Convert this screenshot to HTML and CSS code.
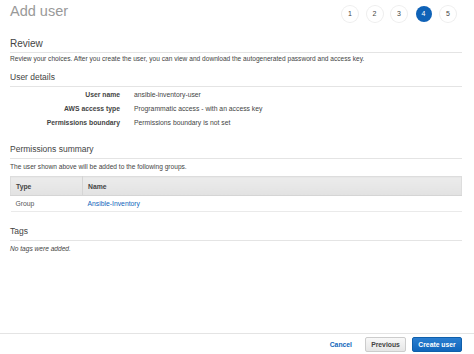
FILE: index.html
```html
<!DOCTYPE html>
<html lang="en">
<head>
  <meta charset="UTF-8">
  <title>Add user</title>
  <link rel="stylesheet" href="styles.css">
</head>
<body>
  <div class="page">
    <header class="top">
      <h1 class="title">Add user</h1>
      <ol class="steps">
        <li class="step">1</li>
        <li class="step">2</li>
        <li class="step">3</li>
        <li class="step active">4</li>
        <li class="step">5</li>
      </ol>
    </header>

    <section class="section">
      <h2 class="section-title big">Review</h2>
      <p class="text">Review your choices. After you create the user, you can view and download the autogenerated password and access key.</p>
    </section>

    <section class="section user-sec">
      <h3 class="section-title">User details</h3>
      <dl class="details">
        <dt>User name</dt>
        <dd>ansible-inventory-user</dd>
        <dt>AWS access type</dt>
        <dd>Programmatic access - with an access key</dd>
        <dt>Permissions boundary</dt>
        <dd>Permissions boundary is not set</dd>
      </dl>
    </section>

    <section class="section perm-sec">
      <h3 class="section-title">Permissions summary</h3>
      <p class="text">The user shown above will be added to the following groups.</p>
      <table class="groups">
        <thead>
          <tr><th class="col-type">Type</th><th>Name</th></tr>
        </thead>
        <tbody>
          <tr><td class="cell-type">Group</td><td><a href="#">Ansible-Inventory</a></td></tr>
        </tbody>
      </table>
    </section>

    <section class="section tags-sec">
      <h3 class="section-title">Tags</h3>
      <p class="text empty">No tags were added.</p>
    </section>
  </div>

  <footer class="actions">
    <a href="#" class="cancel">Cancel</a>
    <button class="btn btn-default">Previous</button>
    <button class="btn btn-primary">Create user</button>
  </footer>
</body>
</html>
```

FILE: styles.css
```css
body {
  font-family: "Liberation Sans", Arial, sans-serif;
  margin: 0;
  width: 474px;
  height: 354px;
  overflow: hidden;
  background: #fff;
  color: #444;
  display: flex;
  flex-direction: column;
}
.page {
  flex: 1;
  padding: 0 12px 0 10px;
}
.top {
  display: flex;
  justify-content: space-between;
  align-items: flex-start;
  height: 38px;
}
.title {
  margin: 0;
  font-size: 14.5px;
  font-weight: normal;
  color: #999;
  line-height: 23px;
}
.steps {
  list-style: none;
  display: flex;
  gap: 8.5px;
  margin: 6px 6px 0 0;
  padding: 0;
}
.step {
  width: 16px;
  height: 16px;
  border-radius: 50%;
  box-shadow: 0 0 0 1px #eee;
  font-size: 7px;
  line-height: 16px;
  text-align: center;
  color: #444;
}
.step.active {
  background: #0f62b7;
  color: #fff;
  box-shadow: none;
}
.user-sec {
  margin-top: 9px;
}
.perm-sec {
  margin-top: 17px;
}
.tags-sec {
  margin-top: 14px;
}
.section-title {
  margin: 0;
  font-size: 8.5px;
  line-height: 10px;
  font-weight: normal;
  color: #444;
  padding-bottom: 4px;
  border-bottom: 1px solid #e4e4e4;
}
.section-title.big {
  font-size: 10px;
  line-height: 12px;
  padding-bottom: 2px;
}
.text {
  font-size: 6.6px;
  line-height: 8px;
  margin: 4px 0 0;
}
.section-title.big + .text {
  margin-top: 2px;
}
.empty {
  font-style: italic;
}
.details {
  display: grid;
  grid-template-columns: 110px 1fr;
  column-gap: 14px;
  row-gap: 6px;
  font-size: 6.8px;
  line-height: 8px;
  margin: 4px 0 0;
}
.details dt {
  text-align: right;
  font-weight: bold;
}
.details dd {
  margin: 0;
}
.groups {
  width: 100%;
  border-collapse: collapse;
  font-size: 6.8px;
  margin-top: 5px;
  color: #444;
}
.groups th {
  text-align: left;
  background: linear-gradient(#ececec, #e2e2e2);
  border-top: 1px solid #ddd;
  border-bottom: 1px solid #d5d5d5;
  height: 18px;
  padding: 0 5px;
  font-weight: bold;
}
.groups th.col-type {
  width: 61px;
  border-right: 1px solid #d5d5d5;
  border-left: 1px solid #ddd;
}
.groups th:last-child {
  border-right: 1px solid #ddd;
}
.groups td {
  height: 15px;
  padding: 0 5px;
  border-bottom: 1px solid #eaeaea;
}
.groups .cell-type {
  color: #555;
}
.groups a {
  color: #1166bb;
  text-decoration: none;
}
.actions {
  border-top: 1px solid #e4e4e4;
  height: 17px;
  padding: 3px 12px 0 0;
  display: flex;
  justify-content: flex-end;
  align-items: flex-start;
  gap: 6px;
}
.cancel {
  font-size: 6.8px;
  font-weight: bold;
  color: #1166bb;
  text-decoration: none;
  line-height: 15px;
  margin-right: 7px;
}
.btn {
  font-family: inherit;
  font-size: 6.8px;
  font-weight: bold;
  height: 15px;
  border-radius: 2px;
  padding: 0;
  white-space: nowrap;
}
.btn-default {
  background: linear-gradient(#f8f8f8, #e6e6e6);
  border: 1px solid #ccc;
  color: #444;
  width: 41px;
}
.btn-primary {
  background: linear-gradient(#2a7ed0, #1166bb);
  border: 1px solid #0f5fab;
  color: #fff;
  width: 50px;
}
```
